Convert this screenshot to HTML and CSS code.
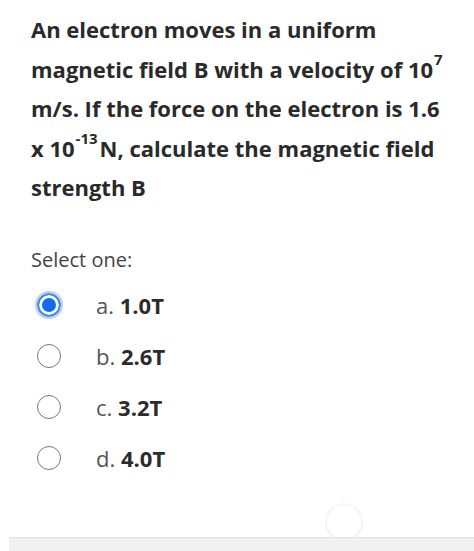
FILE: index.html
```html
<!DOCTYPE html>
<html lang="en">

<head>
    <meta charset="UTF-8" />
    <title>Question</title>
    <link rel="stylesheet" href="styles.css">
</head>

<body>

    <div class="question">
        An electron moves in a uniform<br>
        magnetic field B with a velocity of 10<sup>7</sup><br>
        m/s. If the force on the electron is 1.6<br>
        x 10<sup>-13</sup>N, calculate the magnetic field<br>
        strength B
    </div>

    <div class="prompt">Select one:</div>

    <div class="answers">
        <label class="opt">
            <span class="radio checked"></span>
            <span class="txt">a. <b>1.0T</b></span>
        </label>
        <label class="opt">
            <span class="radio"></span>
            <span class="txt">b. <b>2.6T</b></span>
        </label>
        <label class="opt">
            <span class="radio"></span>
            <span class="txt">c. <b>3.2T</b></span>
        </label>
        <label class="opt">
            <span class="radio"></span>
            <span class="txt">d. <b>4.0T</b></span>
        </label>
    </div>

    <div class="ghost"></div>
    <div class="footer"></div>

</body>

</html>
```

FILE: styles.css
```css
html,
body {
    margin: 0;
    padding: 0;
    background: white;
    color: #2b2b2b;
    font-family: "Open Sans", sans-serif;
    width: 474px;
    height: 551px;
    overflow: hidden;
    position: relative;
}

.question {
    padding: 10px 0 0 31px;
    font-size: 22px;
    font-weight: bold;
    line-height: 39.5px;
    color: #2a2a2a;
    white-space: nowrap;
}

.question sup {
    font-size: 15px;
    line-height: 0;
    vertical-align: 13px;
    margin-left: 1px;
    margin-right: 2px;
}

.prompt {
    margin-top: 38px;
    padding-left: 31px;
    font-size: 20px;
    color: #444;
}

.answers {
    margin-top: 20px;
    padding-left: 37px;
    display: flex;
    flex-direction: column;
    gap: 27px;
}

.opt {
    display: flex;
    align-items: center;
    height: 24px;
}

.radio {
    width: 24px;
    height: 24px;
    border: 1.5px solid #777;
    border-radius: 50%;
    box-sizing: border-box;
    flex: none;
}

.radio.checked {
    border: 2px solid #4d8de0;
    background: #0f6cf0;
    box-shadow: inset 0 0 0 3px white;
    outline: 2px solid #b9d3f5;
}

.txt {
    margin-left: 35px;
    font-size: 22px;
    color: #555;
}

.txt b {
    color: #2b2b2b;
}

.ghost {
    position: absolute;
    left: 325px;
    top: 503px;
    width: 34px;
    height: 34px;
    border-radius: 50%;
    border: 2px solid #f5f5f5;
}

.footer {
    position: absolute;
    left: 9px;
    right: 0;
    bottom: 0;
    height: 13px;
    background: #f1f1f1;
    border-top: 1px solid #e2e2e2;
}
```
